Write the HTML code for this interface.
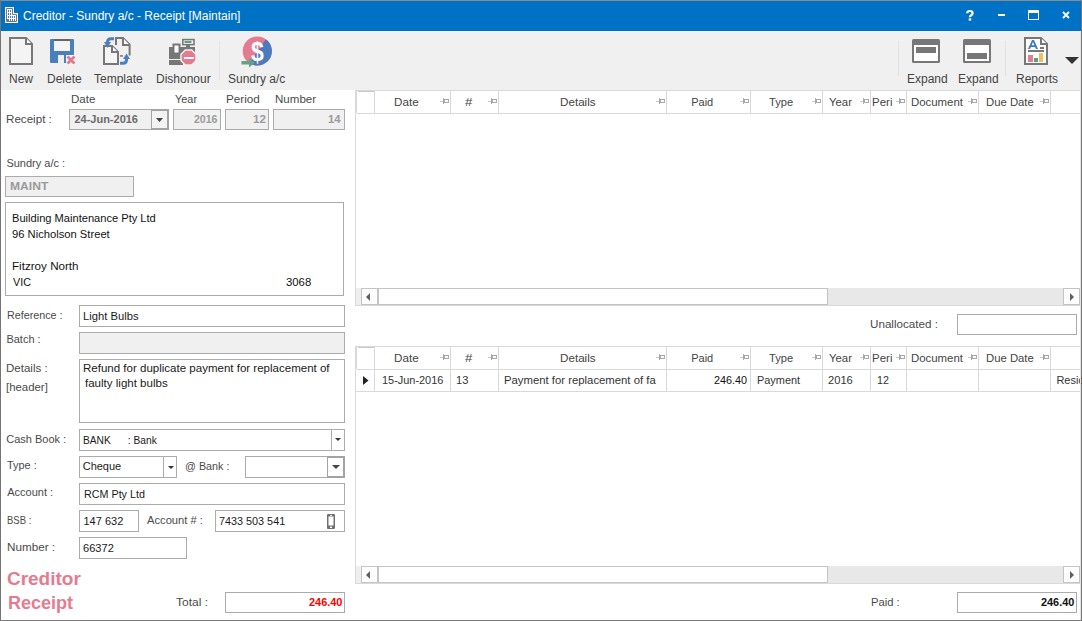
<!DOCTYPE html><html><head><meta charset="utf-8"><style>
html,body{margin:0;padding:0;width:1082px;height:621px;overflow:hidden;background:#fff;}
body{position:relative;font-family:"Liberation Sans", sans-serif;}
.a{position:absolute;}
.t{position:absolute;white-space:pre;font-family:"Liberation Sans", sans-serif;}
svg{position:absolute;overflow:visible;}
</style></head><body>
<div class="a" style="left:0px;top:0px;width:1082px;height:621px;background:#fff;"></div>
<div class="a" style="left:1px;top:1px;width:1080px;height:30px;background:#0072c6;"></div>
<div class="a" style="left:1px;top:31px;width:1080px;height:59px;background:#f0f0f0;"></div>
<div class="a" style="left:0px;top:0px;width:1082px;height:1px;background:#8c8c8c;"></div>
<div class="a" style="left:0px;top:0px;width:1px;height:621px;background:#747474;"></div>
<div class="a" style="left:1081px;top:0px;width:1px;height:621px;background:#747474;"></div>
<div class="a" style="left:0px;top:620px;width:1082px;height:1px;background:#7a7a7a;"></div>
<svg style="left:5px;top:7px" width="14" height="16" viewBox="0 0 14 16">
<path d="M0 0H9V6H13V16H0Z" fill="#fff"/>
<path d="M1.5 1.5H7.5V7.5H11.5V14.5H1.5Z" fill="none" stroke="#777" stroke-width="1"/>
<g fill="#3a78c4"><rect x="3" y="3" width="1" height="2"/><rect x="5" y="3" width="1" height="2"/>
<rect x="3" y="6" width="1" height="2"/><rect x="5" y="6" width="1" height="2"/>
<rect x="3" y="9" width="1" height="2"/><rect x="5" y="9" width="1" height="2"/><rect x="7" y="9" width="1" height="2"/><rect x="9" y="9" width="1" height="2"/>
<rect x="5" y="12" width="1" height="2"/><rect x="7" y="12" width="1" height="2"/><rect x="9" y="12" width="1" height="2"/></g>
<rect x="2" y="12" width="2" height="2" fill="#777"/>
</svg>
<div class="t" style="left:23.00px;top:10px;font-size:12px;line-height:12px;font-weight:400;color:#fff;">Creditor - Sundry a/c - Receipt [Maintain]</div>
<svg style="left:966px;top:10px" width="8" height="11" viewBox="0 0 8 11"><path d="M1.2 3.2Q1.2 1 3.8 1Q6.6 1 6.6 3.2Q6.6 4.6 5.2 5.3Q3.9 6 3.9 7.3" fill="none" stroke="#fff" stroke-width="2.2"/><rect x="2.7" y="8.4" width="2.5" height="2.2" fill="#fff"/></svg>
<div class="a" style="left:998px;top:14px;width:7px;height:2px;background:#fff;"></div>
<div class="a" style="left:1028px;top:10px;width:11px;height:10px;box-sizing:border-box;border:1.5px solid #fff;border-top-width:3px"></div>
<svg style="left:1062px;top:11px" width="8" height="8" viewBox="0 0 8 8"><path d="M1 1L7 7M7 1L1 7" stroke="#fff" stroke-width="1.8"/></svg>
<svg style="left:9px;top:37px" width="24" height="28" viewBox="0 0 24 28">
<path d="M1 1H17L23 7V27H1Z" fill="#f4f4f4" stroke="#777" stroke-width="2"/>
<path d="M17 1V7H23" fill="#fff" stroke="#777" stroke-width="2"/>
</svg>
<div class="t" style="left:9.00px;top:73px;font-size:12px;line-height:12px;font-weight:400;color:#444;">New</div>
<svg style="left:50px;top:39px" width="27" height="26" viewBox="0 0 27 26">
<path d="M1 0H23Q24 0 24 1V16H0V1Q0 0 1 0Z" fill="#4a7ebf"/>
<rect x="4" y="0" width="16" height="12" fill="#f4f4f4"/>
<rect x="4" y="0" width="16" height="2" fill="#666"/>
<path d="M0 15H8V24H1Q0 24 0 23Z" fill="#4a7ebf"/>
<rect x="14" y="16" width="2" height="8" fill="#4a7ebf"/>
<path d="M17.5 17.5L24.5 24.5M24.5 17.5L17.5 24.5" stroke="#fff" stroke-width="5"/>
<path d="M17.5 17.5L24.5 24.5M24.5 17.5L17.5 24.5" stroke="#e07a91" stroke-width="3"/>
</svg>
<div class="t" style="left:47.00px;top:73px;font-size:12px;line-height:12px;font-weight:400;color:#444;">Delete</div>
<svg style="left:103px;top:37px" width="28" height="28" viewBox="0 0 28 28">
<path d="M13 8V1H20L26.6 7.6V18.5" fill="none" stroke="#777" stroke-width="2"/>
<path d="M20 1V8H26.6" fill="#fff" stroke="#777" stroke-width="2"/>
<path d="M1 9H9L15 15V27H1Z" fill="#f4f4f4" stroke="#777" stroke-width="2"/>
<path d="M9 9V15H15" fill="#fff" stroke="#777" stroke-width="2"/>
<rect x="17" y="18.2" width="3" height="1.5" fill="#777"/>
<path d="M11 1.8H8Q4.5 1.8 4.5 5V6" fill="none" stroke="#4a7ebf" stroke-width="3"/>
<path d="M1 5H8L4.5 11Z" fill="#4a7ebf"/>
<path d="M17 26.2H20Q23.5 26.2 23.5 23V21" fill="none" stroke="#4a7ebf" stroke-width="3"/>
<path d="M20 22H27L23.5 16.5Z" fill="#4a7ebf"/>
</svg>
<div class="t" style="left:94.00px;top:73px;font-size:12px;line-height:12px;font-weight:400;color:#444;">Template</div>
<svg style="left:168px;top:38px" width="30" height="28" viewBox="0 0 30 28">
<rect x="14.8" y="1.6" width="11.2" height="5" fill="#fff" stroke="#777" stroke-width="1.6"/>
<rect x="16.5" y="3" width="7" height="2" fill="#5a9e7e"/>
<rect x="18" y="6" width="4" height="3" fill="#777"/>
<rect x="1" y="9" width="26" height="12" fill="#777"/>
<rect x="5.5" y="6.5" width="6" height="9" fill="#fff" stroke="#777" stroke-width="2"/>
<rect x="1" y="22" width="14" height="5" fill="#777"/>
<path d="M17.3 12H23.7L28 16.3V22.7L23.7 27H17.3L13 22.7V16.3Z" fill="#e57b91" stroke="#f0f0f0" stroke-width="1.5"/>
<rect x="16" y="19" width="10" height="2" fill="#fff"/>
</svg>
<div class="t" style="left:156.00px;top:73px;font-size:12px;line-height:12px;font-weight:400;color:#444;">Dishonour</div>
<div class="a" style="left:219px;top:41px;width:1px;height:39px;background:#e2e2e2;"></div>
<svg style="left:241px;top:36px" width="32" height="32" viewBox="0 0 32 32">
<defs><clipPath id="cc"><circle cx="16.3" cy="15" r="14.6"/></clipPath></defs>
<g clip-path="url(#cc)"><rect x="0" y="0" width="32" height="32" fill="#e57b91"/><path d="M37.8 -15.4L-7 49L40 49L40 -15.4Z" fill="#4a7abf"/></g>
<text x="0" y="0" text-anchor="middle" font-family="Liberation Sans" font-weight="700" font-size="27" fill="#fff" transform="translate(16.3 24.6) scale(0.85 1)">$</text>
<path d="M0.5 25H8V22L13.8 26.8L8 31.6V28.6H0.5Z" fill="#62a384"/>
</svg>
<div class="t" style="left:228.00px;top:73px;font-size:12px;line-height:12px;font-weight:400;color:#444;">Sundry a/c</div>
<div class="a" style="left:898px;top:41px;width:1px;height:35px;background:#e2e2e2;"></div>
<div class="a" style="left:1005px;top:41px;width:1px;height:35px;background:#e2e2e2;"></div>
<svg style="left:912px;top:39px" width="28" height="24" viewBox="0 0 28 24">
<rect x="0" y="0" width="28" height="24" rx="1.5" fill="#777"/><rect x="2" y="6" width="24" height="16" fill="#fff"/>
<rect x="4" y="8" width="20" height="6" fill="#777"/></svg>
<svg style="left:963px;top:39px" width="28" height="24" viewBox="0 0 28 24">
<rect x="0" y="0" width="28" height="24" rx="1.5" fill="#777"/><rect x="2" y="6" width="24" height="16" fill="#fff"/>
<rect x="4" y="14" width="20" height="6" fill="#777"/></svg>
<div class="t" style="left:907.00px;top:73px;font-size:12px;line-height:12px;font-weight:400;color:#444;">Expand</div>
<div class="t" style="left:958.00px;top:73px;font-size:12px;line-height:12px;font-weight:400;color:#444;">Expand</div>
<svg style="left:1024px;top:37px" width="24" height="28" viewBox="0 0 24 28">
<path d="M1 1H17L23 7V27H1Z" fill="#fff" stroke="#777" stroke-width="2"/>
<path d="M17 1V7H23" fill="#fff" stroke="#777" stroke-width="2"/>
<path d="M4 12L8 3H10L14 12H12L11 10H7L6 12Z M7.6 8.3H10.4L9 5Z" fill="#3a78c4" fill-rule="evenodd"/>
<rect x="16" y="10" width="4" height="2" fill="#777"/>
<rect x="4" y="13" width="16" height="2" fill="#777"/>
<rect x="4" y="18" width="5" height="7" fill="#e57b91"/>
<rect x="10" y="21" width="4" height="4" fill="#5a9e7e"/>
<rect x="15" y="16" width="4" height="9" fill="#f0c060"/>
</svg>
<div class="t" style="left:1016.00px;top:73px;font-size:12px;line-height:12px;font-weight:400;color:#444;">Reports</div>
<svg style="left:1065px;top:57px" width="14" height="8" viewBox="0 0 14 8"><path d="M0 0H14L7 7Z" fill="#333"/></svg>
<div class="t" style="left:70.55px;top:94px;font-size:11px;line-height:11px;font-weight:400;color:#4a4a4a;transform:scaleX(1.0500);transform-origin:0 0;">Date</div>
<div class="t" style="left:174.91px;top:94px;font-size:11px;line-height:11px;font-weight:400;color:#4a4a4a;transform:scaleX(0.9905);transform-origin:0 0;">Year</div>
<div class="t" style="left:226.14px;top:94px;font-size:11px;line-height:11px;font-weight:400;color:#4a4a4a;transform:scaleX(1.0633);transform-origin:0 0;">Period</div>
<div class="t" style="left:274.65px;top:94px;font-size:11px;line-height:11px;font-weight:400;color:#4a4a4a;transform:scaleX(1.0500);transform-origin:0 0;">Number</div>
<div class="t" style="left:6.14px;top:114px;font-size:11px;line-height:11px;font-weight:400;color:#4a4a4a;transform:scaleX(1.0561);transform-origin:0 0;">Receipt :</div>
<div class="a" style="left:69px;top:109px;width:100px;height:21px;background:#f0f0f0;border:1px solid #ababab;box-sizing:border-box;"></div>
<div class="t" style="left:74.40px;top:114px;font-size:11px;line-height:11px;font-weight:700;color:#6b6b6b;">24-Jun-2016</div>
<div class="a" style="left:151px;top:109px;width:18px;height:21px;box-sizing:border-box;border:2px solid #a3a3a3;border-left-width:1px;background:#f3f3f3"></div>
<svg style="left:156px;top:118px" width="7" height="4" viewBox="0 0 7 4"><path d="M0 0H7L3.5 4Z" fill="#444"/></svg>
<div class="a" style="left:173px;top:109px;width:48px;height:21px;background:#f0f0f0;border:1px solid #ababab;box-sizing:border-box;"></div>
<div class="t" style="left:193.60px;top:114px;font-size:11px;line-height:11px;font-weight:700;color:#9b9b9b;transform:scaleX(0.9583);transform-origin:0 0;">2016</div>
<div class="a" style="left:225px;top:109px;width:44px;height:21px;background:#f0f0f0;border:1px solid #ababab;box-sizing:border-box;"></div>
<div class="t" style="left:252.94px;top:114px;font-size:11px;line-height:11px;font-weight:700;color:#9b9b9b;transform:scaleX(1.0636);transform-origin:0 0;">12</div>
<div class="a" style="left:273px;top:109px;width:72px;height:21px;background:#f0f0f0;border:1px solid #ababab;box-sizing:border-box;"></div>
<div class="t" style="left:328.47px;top:114px;font-size:11px;line-height:11px;font-weight:700;color:#9b9b9b;transform:scaleX(1.0273);transform-origin:0 0;">14</div>
<div class="t" style="left:6.40px;top:158px;font-size:11px;line-height:11px;font-weight:400;color:#4a4a4a;">Sundry a/c :</div>
<div class="a" style="left:5px;top:176px;width:129px;height:21px;background:#f0f0f0;border:1px solid #ababab;box-sizing:border-box;"></div>
<div class="t" style="left:9.60px;top:181px;font-size:11px;line-height:11px;font-weight:700;color:#9a9a9a;transform:scaleX(1.1000);transform-origin:0 0;">MAINT</div>
<div class="a" style="left:5px;top:202px;width:339px;height:94px;background:#fff;border:1px solid #ababab;box-sizing:border-box;"></div>
<div class="t" style="left:12.19px;top:213px;font-size:11px;line-height:11px;font-weight:400;color:#111;transform:scaleX(1.0092);transform-origin:0 0;">Building Maintenance Pty Ltd</div>
<div class="t" style="left:12.18px;top:229px;font-size:11px;line-height:11px;font-weight:400;color:#111;transform:scaleX(1.0179);transform-origin:0 0;">96 Nicholson Street</div>
<div class="t" style="left:12.14px;top:261px;font-size:11px;line-height:11px;font-weight:400;color:#111;transform:scaleX(1.0574);transform-origin:0 0;">Fitzroy North</div>
<div class="t" style="left:13.20px;top:277px;font-size:11px;line-height:11px;font-weight:400;color:#111;transform:scaleX(0.9778);transform-origin:0 0;">VIC</div>
<div class="t" style="left:286.27px;top:277px;font-size:11px;line-height:11px;font-weight:400;color:#111;transform:scaleX(1.0304);transform-origin:0 0;">3068</div>
<div class="t" style="left:6.68px;top:310px;font-size:11px;line-height:11px;font-weight:400;color:#4a4a4a;transform:scaleX(0.9753);transform-origin:0 0;">Reference :</div>
<div class="a" style="left:79px;top:305px;width:266px;height:22px;background:#fff;border:1px solid #ababab;box-sizing:border-box;"></div>
<div class="t" style="left:83.48px;top:311px;font-size:11px;line-height:11px;font-weight:400;color:#1a1a1a;transform:scaleX(1.0208);transform-origin:0 0;">Light Bulbs</div>
<div class="t" style="left:6.40px;top:334px;font-size:11px;line-height:11px;font-weight:400;color:#4a4a4a;">Batch :</div>
<div class="a" style="left:79px;top:332px;width:266px;height:22px;background:#f0f0f0;border:1px solid #ababab;box-sizing:border-box;"></div>
<div class="t" style="left:6.35px;top:363px;font-size:11px;line-height:11px;font-weight:400;color:#4a4a4a;transform:scaleX(1.0474);transform-origin:0 0;">Details :</div>
<div class="t" style="left:6.36px;top:382px;font-size:11px;line-height:11px;font-weight:400;color:#4a4a4a;transform:scaleX(1.0359);transform-origin:0 0;">[header]</div>
<div class="a" style="left:79px;top:359px;width:266px;height:64px;background:#fff;border:1px solid #ababab;box-sizing:border-box;"></div>
<div class="t" style="left:83.45px;top:363px;font-size:11px;line-height:11px;font-weight:400;color:#1a1a1a;transform:scaleX(1.0474);transform-origin:0 0;">Refund for duplicate payment for replacement of</div>
<div class="t" style="left:84.50px;top:378px;font-size:11px;line-height:11px;font-weight:400;color:#1a1a1a;transform:scaleX(1.0481);transform-origin:0 0;">faulty light bulbs</div>
<div class="t" style="left:6.20px;top:434px;font-size:11px;line-height:11px;font-weight:400;color:#4a4a4a;">Cash Book :</div>
<div class="a" style="left:79px;top:429px;width:266px;height:22px;background:#fff;border:1px solid #ababab;box-sizing:border-box;"></div>
<div class="a" style="left:331px;top:430px;width:1px;height:20px;background:#ababab;"></div>
<svg style="left:335px;top:438px" width="6" height="3" viewBox="0 0 6 3"><path d="M0 0H6L3 3Z" fill="#333"/></svg>
<div class="t" style="left:82.77px;top:435px;font-size:11px;line-height:11px;font-weight:400;color:#1a1a1a;transform:scaleX(0.9282);transform-origin:0 0;">BANK      : Bank</div>
<div class="t" style="left:7.20px;top:460px;font-size:11px;line-height:11px;font-weight:400;color:#4a4a4a;transform:scaleX(0.9931);transform-origin:0 0;">Type :</div>
<div class="a" style="left:79px;top:456px;width:98px;height:22px;background:#fff;border:1px solid #ababab;box-sizing:border-box;"></div>
<div class="a" style="left:163px;top:457px;width:1px;height:20px;background:#ababab;"></div>
<svg style="left:168px;top:466px" width="6" height="3" viewBox="0 0 6 3"><path d="M0 0H6L3 3Z" fill="#333"/></svg>
<div class="t" style="left:82.70px;top:461px;font-size:11px;line-height:11px;font-weight:400;color:#1a1a1a;">Cheque</div>
<div class="t" style="left:184.62px;top:461px;font-size:11px;line-height:11px;font-weight:400;color:#4a4a4a;transform:scaleX(0.9791);transform-origin:0 0;">@ Bank :</div>
<div class="a" style="left:245px;top:456px;width:100px;height:22px;background:#fff;border:1px solid #ababab;box-sizing:border-box;"></div>
<div class="a" style="left:327px;top:456px;width:18px;height:22px;box-sizing:border-box;border:2px solid #a3a3a3;border-left-width:1px;background:#fff"></div>
<svg style="left:332px;top:465px" width="8" height="4" viewBox="0 0 8 4"><path d="M0 0H8L4 4Z" fill="#444"/></svg>
<div class="t" style="left:7.20px;top:487px;font-size:11px;line-height:11px;font-weight:400;color:#4a4a4a;">Account :</div>
<div class="a" style="left:79px;top:483px;width:266px;height:22px;background:#fff;border:1px solid #ababab;box-sizing:border-box;"></div>
<div class="t" style="left:83.52px;top:489px;font-size:11px;line-height:11px;font-weight:400;color:#1a1a1a;transform:scaleX(0.9770);transform-origin:0 0;">RCM Pty Ltd</div>
<div class="t" style="left:6.73px;top:515px;font-size:11px;line-height:11px;font-weight:400;color:#4a4a4a;transform:scaleX(0.8654);transform-origin:0 0;">BSB :</div>
<div class="a" style="left:79px;top:510px;width:60px;height:22px;background:#fff;border:1px solid #ababab;box-sizing:border-box;"></div>
<div class="t" style="left:83.50px;top:516px;font-size:11px;line-height:11px;font-weight:400;color:#1a1a1a;">147 632</div>
<div class="t" style="left:147.40px;top:515px;font-size:11px;line-height:11px;font-weight:400;color:#4a4a4a;transform:scaleX(1.0167);transform-origin:0 0;">Account # :</div>
<div class="a" style="left:215px;top:510px;width:130px;height:22px;background:#fff;border:1px solid #ababab;box-sizing:border-box;"></div>
<div class="t" style="left:219.22px;top:516px;font-size:11px;line-height:11px;font-weight:400;color:#1a1a1a;transform:scaleX(0.9833);transform-origin:0 0;">7433 503 541</div>
<svg style="left:327px;top:514px" width="9" height="15" viewBox="0 0 9 15"><rect x="0" y="0" width="8" height="15" rx="1" fill="#707070"/><rect x="1.5" y="2.5" width="5" height="9" fill="#fff"/><rect x="3" y="0.9" width="2" height="0.9" fill="#fff"/><rect x="3" y="12.6" width="2" height="1.4" fill="#fff"/></svg>
<div class="t" style="left:6.54px;top:542px;font-size:11px;line-height:11px;font-weight:400;color:#4a4a4a;transform:scaleX(1.0628);transform-origin:0 0;">Number :</div>
<div class="a" style="left:79px;top:537px;width:108px;height:22px;background:#fff;border:1px solid #ababab;box-sizing:border-box;"></div>
<div class="t" style="left:83.49px;top:543px;font-size:11px;line-height:11px;font-weight:400;color:#1a1a1a;transform:scaleX(1.0069);transform-origin:0 0;">66372</div>
<div class="t" style="left:7.25px;top:570px;font-size:18px;line-height:18px;font-weight:700;color:#e57b91;transform:scaleX(1.0536);transform-origin:0 0;">Creditor</div>
<div class="t" style="left:7.90px;top:594px;font-size:18px;line-height:18px;font-weight:700;color:#e57b91;">Receipt</div>
<div class="t" style="left:175.80px;top:597px;font-size:11px;line-height:11px;font-weight:400;color:#4a4a4a;transform:scaleX(1.0893);transform-origin:0 0;">Total :</div>
<div class="a" style="left:225px;top:592px;width:120px;height:21px;background:#fff;border:1px solid #ababab;box-sizing:border-box;"></div>
<div class="t" style="left:308.90px;top:597px;font-size:11px;line-height:11px;font-weight:700;color:#ff0000;transform:scaleX(0.9939);transform-origin:0 0;">246.40</div>
<div class="a" style="left:355px;top:90px;width:1px;height:216px;background:#d9d9d9;"></div>
<div class="a" style="left:355px;top:90px;width:725px;height:1px;background:#d9d9d9;"></div>
<div class="a" style="left:355px;top:90px;width:2px;height:23px;background:#d9d9d9;"></div>
<div class="a" style="left:357px;top:113px;width:723px;height:1px;background:#d9d9d9;"></div>
<div class="a" style="left:374px;top:90px;width:1px;height:23px;background:#d9d9d9;"></div>
<div class="a" style="left:450px;top:90px;width:1px;height:23px;background:#d9d9d9;"></div>
<div class="a" style="left:498px;top:90px;width:1px;height:23px;background:#d9d9d9;"></div>
<div class="a" style="left:666px;top:90px;width:1px;height:23px;background:#d9d9d9;"></div>
<div class="a" style="left:750px;top:90px;width:1px;height:23px;background:#d9d9d9;"></div>
<div class="a" style="left:822px;top:90px;width:1px;height:23px;background:#d9d9d9;"></div>
<div class="a" style="left:870px;top:90px;width:1px;height:23px;background:#d9d9d9;"></div>
<div class="a" style="left:906px;top:90px;width:1px;height:23px;background:#d9d9d9;"></div>
<div class="a" style="left:978px;top:90px;width:1px;height:23px;background:#d9d9d9;"></div>
<div class="a" style="left:1050px;top:90px;width:1px;height:23px;background:#d9d9d9;"></div>
<div class="a" style="left:358px;top:91px;width:16px;height:1px;background:#c8c8c8;"></div>
<div class="t" style="left:394.44px;top:97px;font-size:11px;line-height:11px;font-weight:400;color:#444;transform:scaleX(1.0591);transform-origin:0 0;">Date</div>
<div class="t" style="left:464.90px;top:97px;font-size:11px;line-height:11px;font-weight:400;color:#444;transform:scaleX(1.2000);transform-origin:0 0;">#</div>
<div class="t" style="left:559.74px;top:97px;font-size:11px;line-height:11px;font-weight:400;color:#444;transform:scaleX(1.0594);transform-origin:0 0;">Details</div>
<div class="t" style="left:691.20px;top:97px;font-size:11px;line-height:11px;font-weight:400;color:#444;">Paid</div>
<div class="t" style="left:769.40px;top:97px;font-size:11px;line-height:11px;font-weight:400;color:#444;transform:scaleX(1.0130);transform-origin:0 0;">Type</div>
<div class="t" style="left:829.17px;top:97px;font-size:11px;line-height:11px;font-weight:400;color:#444;transform:scaleX(1.0333);transform-origin:0 0;">Year</div>
<div class="t" style="left:871.96px;top:97px;font-size:11px;line-height:11px;font-weight:400;color:#444;transform:scaleX(1.0444);transform-origin:0 0;">Peri</div>
<div class="t" style="left:910.76px;top:97px;font-size:11px;line-height:11px;font-weight:400;color:#444;transform:scaleX(1.0367);transform-origin:0 0;">Document</div>
<div class="t" style="left:985.57px;top:97px;font-size:11px;line-height:11px;font-weight:400;color:#444;transform:scaleX(1.0289);transform-origin:0 0;">Due Date</div>
<svg style="left:440px;top:98px" width="10" height="7" viewBox="0 0 10 7"><rect x="0" y="3" width="3" height="1" fill="#c8c8c8"/><rect x="3" y="0" width="1" height="6" fill="#aaa"/><rect x="4.5" y="1.5" width="4" height="3" fill="#fff" stroke="#aaa" stroke-width="1"/></svg>
<svg style="left:488px;top:98px" width="10" height="7" viewBox="0 0 10 7"><rect x="0" y="3" width="3" height="1" fill="#c8c8c8"/><rect x="3" y="0" width="1" height="6" fill="#aaa"/><rect x="4.5" y="1.5" width="4" height="3" fill="#fff" stroke="#aaa" stroke-width="1"/></svg>
<svg style="left:656px;top:98px" width="10" height="7" viewBox="0 0 10 7"><rect x="0" y="3" width="3" height="1" fill="#c8c8c8"/><rect x="3" y="0" width="1" height="6" fill="#aaa"/><rect x="4.5" y="1.5" width="4" height="3" fill="#fff" stroke="#aaa" stroke-width="1"/></svg>
<svg style="left:740px;top:98px" width="10" height="7" viewBox="0 0 10 7"><rect x="0" y="3" width="3" height="1" fill="#c8c8c8"/><rect x="3" y="0" width="1" height="6" fill="#aaa"/><rect x="4.5" y="1.5" width="4" height="3" fill="#fff" stroke="#aaa" stroke-width="1"/></svg>
<svg style="left:812px;top:98px" width="10" height="7" viewBox="0 0 10 7"><rect x="0" y="3" width="3" height="1" fill="#c8c8c8"/><rect x="3" y="0" width="1" height="6" fill="#aaa"/><rect x="4.5" y="1.5" width="4" height="3" fill="#fff" stroke="#aaa" stroke-width="1"/></svg>
<svg style="left:860px;top:98px" width="10" height="7" viewBox="0 0 10 7"><rect x="0" y="3" width="3" height="1" fill="#c8c8c8"/><rect x="3" y="0" width="1" height="6" fill="#aaa"/><rect x="4.5" y="1.5" width="4" height="3" fill="#fff" stroke="#aaa" stroke-width="1"/></svg>
<svg style="left:896px;top:98px" width="10" height="7" viewBox="0 0 10 7"><rect x="0" y="3" width="3" height="1" fill="#c8c8c8"/><rect x="3" y="0" width="1" height="6" fill="#aaa"/><rect x="4.5" y="1.5" width="4" height="3" fill="#fff" stroke="#aaa" stroke-width="1"/></svg>
<svg style="left:968px;top:98px" width="10" height="7" viewBox="0 0 10 7"><rect x="0" y="3" width="3" height="1" fill="#c8c8c8"/><rect x="3" y="0" width="1" height="6" fill="#aaa"/><rect x="4.5" y="1.5" width="4" height="3" fill="#fff" stroke="#aaa" stroke-width="1"/></svg>
<svg style="left:1040px;top:98px" width="10" height="7" viewBox="0 0 10 7"><rect x="0" y="3" width="3" height="1" fill="#c8c8c8"/><rect x="3" y="0" width="1" height="6" fill="#aaa"/><rect x="4.5" y="1.5" width="4" height="3" fill="#fff" stroke="#aaa" stroke-width="1"/></svg>
<svg style="left:440px;top:98px" width="10" height="7" viewBox="0 0 10 7"><rect x="0" y="3" width="3" height="1" fill="#c8c8c8"/><rect x="3" y="0" width="1" height="6" fill="#aaa"/><rect x="4.5" y="1.5" width="4" height="3" fill="#fff" stroke="#aaa" stroke-width="1"/></svg>
<div class="a" style="left:356px;top:288px;width:724px;height:17px;background:#e8e8e8;"></div>
<div class="a" style="left:356px;top:288px;width:5px;height:17px;background:#efefef;"></div>
<div class="a" style="left:361px;top:288px;width:17px;height:17px;box-sizing:border-box;border:1px solid #c4c4c4;background:#fff"></div>
<svg style="left:366px;top:293px" width="4" height="8" viewBox="0 0 4 8"><path d="M4 0V8L0 4Z" fill="#606060"/></svg>
<div class="a" style="left:377px;top:288px;width:451px;height:17px;box-sizing:border-box;border:1px solid #c4c4c4;border-left-width:2px;background:#fff"></div>
<div class="a" style="left:1063px;top:288px;width:17px;height:17px;box-sizing:border-box;border:1px solid #c4c4c4;background:#fff"></div>
<svg style="left:1070px;top:293px" width="4" height="8" viewBox="0 0 4 8"><path d="M0 0V8L4 4Z" fill="#606060"/></svg>
<div class="a" style="left:356px;top:305px;width:725px;height:1px;background:#d9d9d9;"></div>
<div class="t" style="left:870.49px;top:319px;font-size:11px;line-height:11px;font-weight:400;color:#4a4a4a;transform:scaleX(1.0589);transform-origin:0 0;">Unallocated :</div>
<div class="a" style="left:957px;top:314px;width:120px;height:21px;background:#fff;border:1px solid #ababab;box-sizing:border-box;"></div>
<div class="a" style="left:355px;top:346px;width:1px;height:238px;background:#d9d9d9;"></div>
<div class="a" style="left:355px;top:346px;width:725px;height:1px;background:#d9d9d9;"></div>
<div class="a" style="left:355px;top:346px;width:2px;height:23px;background:#d9d9d9;"></div>
<div class="a" style="left:357px;top:369px;width:723px;height:1px;background:#d9d9d9;"></div>
<div class="a" style="left:374px;top:346px;width:1px;height:23px;background:#d9d9d9;"></div>
<div class="a" style="left:450px;top:346px;width:1px;height:23px;background:#d9d9d9;"></div>
<div class="a" style="left:498px;top:346px;width:1px;height:23px;background:#d9d9d9;"></div>
<div class="a" style="left:666px;top:346px;width:1px;height:23px;background:#d9d9d9;"></div>
<div class="a" style="left:750px;top:346px;width:1px;height:23px;background:#d9d9d9;"></div>
<div class="a" style="left:822px;top:346px;width:1px;height:23px;background:#d9d9d9;"></div>
<div class="a" style="left:870px;top:346px;width:1px;height:23px;background:#d9d9d9;"></div>
<div class="a" style="left:906px;top:346px;width:1px;height:23px;background:#d9d9d9;"></div>
<div class="a" style="left:978px;top:346px;width:1px;height:23px;background:#d9d9d9;"></div>
<div class="a" style="left:1050px;top:346px;width:1px;height:23px;background:#d9d9d9;"></div>
<div class="a" style="left:358px;top:347px;width:16px;height:1px;background:#c8c8c8;"></div>
<div class="t" style="left:394.44px;top:353px;font-size:11px;line-height:11px;font-weight:400;color:#444;transform:scaleX(1.0591);transform-origin:0 0;">Date</div>
<div class="t" style="left:464.90px;top:353px;font-size:11px;line-height:11px;font-weight:400;color:#444;transform:scaleX(1.2000);transform-origin:0 0;">#</div>
<div class="t" style="left:559.74px;top:353px;font-size:11px;line-height:11px;font-weight:400;color:#444;transform:scaleX(1.0594);transform-origin:0 0;">Details</div>
<div class="t" style="left:691.20px;top:353px;font-size:11px;line-height:11px;font-weight:400;color:#444;">Paid</div>
<div class="t" style="left:769.40px;top:353px;font-size:11px;line-height:11px;font-weight:400;color:#444;transform:scaleX(1.0130);transform-origin:0 0;">Type</div>
<div class="t" style="left:829.17px;top:353px;font-size:11px;line-height:11px;font-weight:400;color:#444;transform:scaleX(1.0333);transform-origin:0 0;">Year</div>
<div class="t" style="left:871.96px;top:353px;font-size:11px;line-height:11px;font-weight:400;color:#444;transform:scaleX(1.0444);transform-origin:0 0;">Peri</div>
<div class="t" style="left:910.76px;top:353px;font-size:11px;line-height:11px;font-weight:400;color:#444;transform:scaleX(1.0367);transform-origin:0 0;">Document</div>
<div class="t" style="left:985.57px;top:353px;font-size:11px;line-height:11px;font-weight:400;color:#444;transform:scaleX(1.0289);transform-origin:0 0;">Due Date</div>
<svg style="left:440px;top:354px" width="10" height="7" viewBox="0 0 10 7"><rect x="0" y="3" width="3" height="1" fill="#c8c8c8"/><rect x="3" y="0" width="1" height="6" fill="#aaa"/><rect x="4.5" y="1.5" width="4" height="3" fill="#fff" stroke="#aaa" stroke-width="1"/></svg>
<svg style="left:488px;top:354px" width="10" height="7" viewBox="0 0 10 7"><rect x="0" y="3" width="3" height="1" fill="#c8c8c8"/><rect x="3" y="0" width="1" height="6" fill="#aaa"/><rect x="4.5" y="1.5" width="4" height="3" fill="#fff" stroke="#aaa" stroke-width="1"/></svg>
<svg style="left:656px;top:354px" width="10" height="7" viewBox="0 0 10 7"><rect x="0" y="3" width="3" height="1" fill="#c8c8c8"/><rect x="3" y="0" width="1" height="6" fill="#aaa"/><rect x="4.5" y="1.5" width="4" height="3" fill="#fff" stroke="#aaa" stroke-width="1"/></svg>
<svg style="left:740px;top:354px" width="10" height="7" viewBox="0 0 10 7"><rect x="0" y="3" width="3" height="1" fill="#c8c8c8"/><rect x="3" y="0" width="1" height="6" fill="#aaa"/><rect x="4.5" y="1.5" width="4" height="3" fill="#fff" stroke="#aaa" stroke-width="1"/></svg>
<svg style="left:812px;top:354px" width="10" height="7" viewBox="0 0 10 7"><rect x="0" y="3" width="3" height="1" fill="#c8c8c8"/><rect x="3" y="0" width="1" height="6" fill="#aaa"/><rect x="4.5" y="1.5" width="4" height="3" fill="#fff" stroke="#aaa" stroke-width="1"/></svg>
<svg style="left:860px;top:354px" width="10" height="7" viewBox="0 0 10 7"><rect x="0" y="3" width="3" height="1" fill="#c8c8c8"/><rect x="3" y="0" width="1" height="6" fill="#aaa"/><rect x="4.5" y="1.5" width="4" height="3" fill="#fff" stroke="#aaa" stroke-width="1"/></svg>
<svg style="left:896px;top:354px" width="10" height="7" viewBox="0 0 10 7"><rect x="0" y="3" width="3" height="1" fill="#c8c8c8"/><rect x="3" y="0" width="1" height="6" fill="#aaa"/><rect x="4.5" y="1.5" width="4" height="3" fill="#fff" stroke="#aaa" stroke-width="1"/></svg>
<svg style="left:968px;top:354px" width="10" height="7" viewBox="0 0 10 7"><rect x="0" y="3" width="3" height="1" fill="#c8c8c8"/><rect x="3" y="0" width="1" height="6" fill="#aaa"/><rect x="4.5" y="1.5" width="4" height="3" fill="#fff" stroke="#aaa" stroke-width="1"/></svg>
<svg style="left:1040px;top:354px" width="10" height="7" viewBox="0 0 10 7"><rect x="0" y="3" width="3" height="1" fill="#c8c8c8"/><rect x="3" y="0" width="1" height="6" fill="#aaa"/><rect x="4.5" y="1.5" width="4" height="3" fill="#fff" stroke="#aaa" stroke-width="1"/></svg>
<svg style="left:440px;top:354px" width="10" height="7" viewBox="0 0 10 7"><rect x="0" y="3" width="3" height="1" fill="#c8c8c8"/><rect x="3" y="0" width="1" height="6" fill="#aaa"/><rect x="4.5" y="1.5" width="4" height="3" fill="#fff" stroke="#aaa" stroke-width="1"/></svg>
<div class="a" style="left:374px;top:370px;width:1px;height:21px;background:#d9d9d9;"></div>
<div class="a" style="left:450px;top:370px;width:1px;height:21px;background:#d9d9d9;"></div>
<div class="a" style="left:498px;top:370px;width:1px;height:21px;background:#d9d9d9;"></div>
<div class="a" style="left:666px;top:370px;width:1px;height:21px;background:#d9d9d9;"></div>
<div class="a" style="left:750px;top:370px;width:1px;height:21px;background:#d9d9d9;"></div>
<div class="a" style="left:822px;top:370px;width:1px;height:21px;background:#d9d9d9;"></div>
<div class="a" style="left:870px;top:370px;width:1px;height:21px;background:#d9d9d9;"></div>
<div class="a" style="left:906px;top:370px;width:1px;height:21px;background:#d9d9d9;"></div>
<div class="a" style="left:978px;top:370px;width:1px;height:21px;background:#d9d9d9;"></div>
<div class="a" style="left:1050px;top:370px;width:1px;height:21px;background:#d9d9d9;"></div>
<div class="a" style="left:356px;top:391px;width:724px;height:1px;background:#d9d9d9;"></div>
<svg style="left:363px;top:376px" width="6" height="9" viewBox="0 0 6 9"><path d="M0 0L5.5 4.5L0 9Z" fill="#222"/></svg>
<div class="t" style="left:382.31px;top:375px;font-size:11px;line-height:11px;font-weight:400;color:#333;transform:scaleX(0.9933);transform-origin:0 0;">15-Jun-2016</div>
<div class="t" style="left:456.29px;top:375px;font-size:11px;line-height:11px;font-weight:400;color:#333;transform:scaleX(1.0091);transform-origin:0 0;">13</div>
<div class="t" style="left:504.27px;top:375px;font-size:11px;line-height:11px;font-weight:400;color:#333;transform:scaleX(1.0295);transform-origin:0 0;">Payment for replacement of fa</div>
<div class="t" style="left:714.42px;top:375px;font-size:11px;line-height:11px;font-weight:400;color:#111;transform:scaleX(0.9844);transform-origin:0 0;">246.40</div>
<div class="t" style="left:756.61px;top:375px;font-size:11px;line-height:11px;font-weight:400;color:#333;transform:scaleX(0.9929);transform-origin:0 0;">Payment</div>
<div class="t" style="left:828.19px;top:375px;font-size:11px;line-height:11px;font-weight:400;color:#333;transform:scaleX(1.0130);transform-origin:0 0;">2016</div>
<div class="t" style="left:877.03px;top:375px;font-size:11px;line-height:11px;font-weight:400;color:#333;transform:scaleX(0.9727);transform-origin:0 0;">12</div>
<div class="t" style="left:1056.40px;top:375px;font-size:11px;line-height:11px;font-weight:400;color:#333;">Resid</div>
<div class="a" style="left:356px;top:566px;width:724px;height:17px;background:#e8e8e8;"></div>
<div class="a" style="left:356px;top:566px;width:5px;height:17px;background:#efefef;"></div>
<div class="a" style="left:361px;top:566px;width:17px;height:17px;box-sizing:border-box;border:1px solid #c4c4c4;background:#fff"></div>
<svg style="left:366px;top:571px" width="4" height="8" viewBox="0 0 4 8"><path d="M4 0V8L0 4Z" fill="#606060"/></svg>
<div class="a" style="left:377px;top:566px;width:451px;height:17px;box-sizing:border-box;border:1px solid #c4c4c4;border-left-width:2px;background:#fff"></div>
<div class="a" style="left:1063px;top:566px;width:17px;height:17px;box-sizing:border-box;border:1px solid #c4c4c4;background:#fff"></div>
<svg style="left:1070px;top:571px" width="4" height="8" viewBox="0 0 4 8"><path d="M0 0V8L4 4Z" fill="#606060"/></svg>
<div class="a" style="left:356px;top:583px;width:725px;height:1px;background:#d9d9d9;"></div>
<div class="t" style="left:870.53px;top:597px;font-size:11px;line-height:11px;font-weight:400;color:#4a4a4a;transform:scaleX(1.0212);transform-origin:0 0;">Paid :</div>
<div class="a" style="left:957px;top:592px;width:120px;height:21px;background:#fff;border:1px solid #ababab;box-sizing:border-box;"></div>
<div class="t" style="left:1041.20px;top:597px;font-size:11px;line-height:11px;font-weight:700;color:#111;transform:scaleX(0.9909);transform-origin:0 0;">246.40</div>
<div class="a" style="left:1080px;top:31px;width:1px;height:589px;background:#e4e4e4;"></div>
</body></html>
